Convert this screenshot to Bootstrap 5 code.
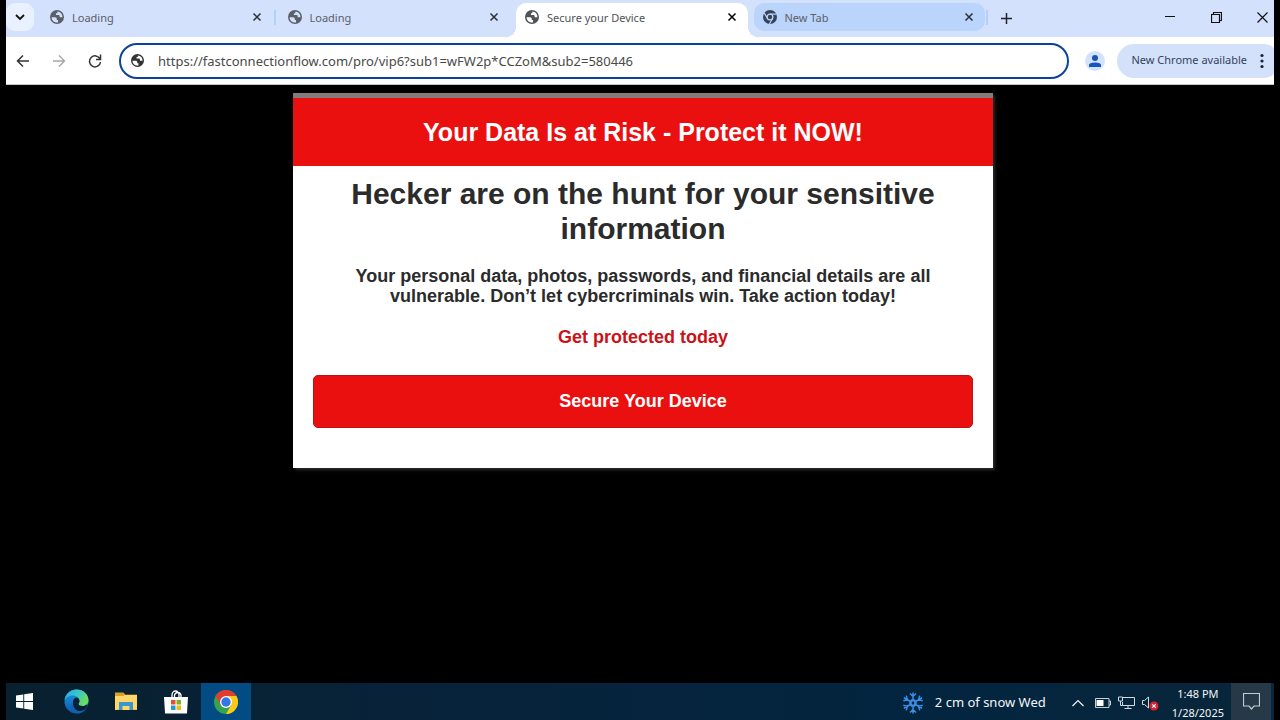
<!DOCTYPE html>
<html lang="en">
<head>
<meta charset="utf-8">
<meta name="viewport" content="width=device-width, initial-scale=1">
<title>Secure your Device</title>
<link href="https://cdn.jsdelivr.net/npm/bootstrap@5.3.0/dist/css/bootstrap.min.css" rel="stylesheet">
<style>
  body { font-family: "Noto Sans", "Open Sans", sans-serif; font-size: 12px; padding: 0 6px; background: #000; color: #3c4043; }
  button { font-family: inherit; }
  svg { display: block; flex: none; }
  .bare { border: 0; background: none; padding: 0; color: inherit; display: flex; align-items: center; justify-content: center; flex: none; }

  /* Tab strip */
  .strip { background: #d3e1fd; height: 37px; }
  .search-tabs { width: 28px; height: 28px; background: #eaf1fe; border-radius: 9px; color: #111; margin: 3px 7px 0 0; }
  .tabs { gap: 6px; flex: 0 1 944px; min-width: 0; }
  .tab { flex: 1 1 0; min-width: 0; height: 28px; margin-top: 3px; padding: 0 11px 0 9px; border-radius: 10px; position: relative; color: #5a6068; }
  .tab-name { color: inherit; font-size: 11px; line-height: 16px; padding-top: 2px; text-decoration: none; }
  .tab .bare { color: #2c3035; }
  .tab-split::after { content: ""; position: absolute; right: -3px; top: 7px; width: 2px; height: 15px; background: #b4d0f6; }
  .tab-hover { background: #bbd4fb; }
  .tab-active { background: #fff; height: 34px; border-radius: 10px 10px 0 0; padding-bottom: 6px; color: #505356; }
  .tab-active::before, .tab-active::after { content: ""; position: absolute; bottom: 0; width: 10px; height: 10px; }
  .tab-active::before { left: -10px; background: radial-gradient(circle at 0 0, transparent 10px, #fff 10px); }
  .tab-active::after { right: -10px; background: radial-gradient(circle at 100% 0, transparent 10px, #fff 10px); }
  .win { gap: 34px; padding-right: 6px; color: #111; }
  .win .bare { width: 12px; height: 34px; }

  /* Toolbar */
  .tools { background: #fff; height: 48px; border-bottom: 1px solid #c8c8c8; padding-left: 8px; color: #333; }
  .nav-set { gap: 18px; margin-right: 15px; }
  .nav-set .bare { width: 18px; height: 28px; }
  .address { border: 2px solid #0b439c; height: 36px; padding: 0 12px 0 10px; min-width: 0; }
  .address input { border: 0; outline: 0; background: none; font-size: 13px; line-height: 20px; color: #4a4a4a; min-width: 0; padding: 0; margin-left: 14px; }
  .avatar { width: 20px; height: 20px; background: #d3e3fd; border-radius: 50%; margin: 0 12px 0 16px; }
  .update { background: #d3e1fb; color: #33415e; height: 34px; border-radius: 17px; padding: 0 16px 0 14px; margin-right: -6px; gap: 13px; font-size: 11px; }

  /* Page */
  .page { font-family: "Liberation Sans", Arial, sans-serif; padding: 8px 0 20px 6px; }
  .notice { width: 100%; max-width: 700px; background: #fff; border-top: 5px solid #857b7b; box-shadow: 2px 2px 3px #2c2c2c; color: #2b2b2b; padding-bottom: 40px; }
  .notice-head { background: #eb1010; color: #fff; font-size: 25px; line-height: 30px; padding: 19px 20px; }
  .notice h1 { font-size: 30px; line-height: 35px; margin: 0 0 20px; }
  .notice-body { padding: 10px 20px 0; }
  .notice-body p { font-size: 18px; line-height: 20px; margin: 0 0 21px; }
  .notice-body .call { color: #cc1119; margin-bottom: 28px; }
  .secure { background: #eb1010; border: 1px solid #b81414; color: #fff; border-radius: 5px; height: 53px; font-size: 18px; }

  /* Taskbar */
  .taskbar { height: 37px; background: linear-gradient(90deg, #08202f, #07233c 40%, #03253f 75%, #09263a); color: #f2f5f7; }
  .taskbar .app { width: 50px; height: 37px; }
  .taskbar .app-start { width: 45px; padding-right: 8px; }
  .taskbar .app-open { background: #034b83; }
  .weather { font-size: 13px; gap: 11px; margin-right: 26px; padding-top: 3px; }
  .tray { gap: 7px; margin-right: 13px; padding-top: 2px; }
  .clock { font-size: 11px; line-height: 19px; margin-right: 7px; padding-top: 3px; }
  .alerts { background: #263947; width: 40px; height: 37px; margin-right: 3px; }
</style>
</head>
<body class="d-flex flex-column vh-100 overflow-hidden">

<svg width="0" height="0" class="position-absolute" aria-hidden="true">
  <symbol id="globe" viewBox="2 2 20 20"><path fill="currentColor" fill-rule="evenodd" d="M12 2a10 10 0 1 0 0 20 10 10 0 0 0 0-20zM4.300 12.300H9c1.700 0 2.700 1 2.700 2.700v1.200h1.800v3.500C8.500 20.600 4.300 17 4.300 12.300zM12.500 4.300c4.200.2 7.300 3.600 7.300 8h-4v-1.600c0-1.100-.8-1.700-2-1.700h-3.300V6.600h2z"/></symbol>
  <symbol id="close" viewBox="0 0 10 10"><path d="M1.500 1.500l7 7M8.500 1.500l-7 7" stroke="currentColor" stroke-width="1.500" fill="none"/></symbol>
</svg>

<header class="flex-shrink-0">
  <div class="strip d-flex">
    <button class="bare search-tabs" aria-label="Search tabs"><svg width="10" height="8" viewBox="0 0 10 8"><path d="M1 2L5 6 9 2" fill="none" stroke="currentColor" stroke-width="1.800"/></svg></button>
    <nav class="tabs d-flex" aria-label="Tabs">
      <div class="tab tab-split d-flex align-items-center">
        <svg class="me-2" width="14" height="14"><use href="#globe"/></svg>
        <a class="tab-name text-truncate" href="#">Loading</a>
        <button class="bare ms-auto" aria-label="Close tab"><svg width="10" height="10"><use href="#close"/></svg></button>
      </div>
      <div class="tab d-flex align-items-center">
        <svg class="me-2" width="14" height="14"><use href="#globe"/></svg>
        <a class="tab-name text-truncate" href="#">Loading</a>
        <button class="bare ms-auto" aria-label="Close tab"><svg width="10" height="10"><use href="#close"/></svg></button>
      </div>
      <div class="tab tab-active d-flex align-items-center">
        <svg class="me-2" width="14" height="14"><use href="#globe"/></svg>
        <a class="tab-name text-truncate" href="#" aria-current="page">Secure your Device</a>
        <button class="bare ms-auto text-black" aria-label="Close tab"><svg width="10" height="10"><use href="#close"/></svg></button>
      </div>
      <div class="tab tab-hover tab-split d-flex align-items-center">
        <svg class="me-2" width="14" height="14" viewBox="0 0 24 24"><circle cx="12" cy="12" r="12" fill="#36445a"/><circle cx="12" cy="12" r="6" fill="#bbd4fb"/><circle cx="12" cy="12" r="3.800" fill="#36445a"/><path d="M12 7h11M7.700 14.500L2 5M16.300 14.500L11 24" stroke="#bbd4fb" stroke-width="2" fill="none"/></svg>
        <a class="tab-name text-truncate" href="#">New Tab</a>
        <button class="bare ms-auto" aria-label="Close tab"><svg width="10" height="10"><use href="#close"/></svg></button>
      </div>
    </nav>
    <button class="bare ms-3 text-dark" aria-label="New tab"><svg width="11" height="11" viewBox="0 0 11 11"><path d="M5.500 0v11M0 5.500h11" stroke="currentColor" stroke-width="1.500"/></svg></button>
    <div class="win d-flex ms-auto">
      <button class="bare" aria-label="Minimize"><svg width="10" height="10" viewBox="0 0 10 10"><path d="M0 4.500h10" stroke="currentColor"/></svg></button>
      <button class="bare" aria-label="Restore"><svg width="11" height="11" viewBox="0 0 11 11"><path d="M.5 2.500h8v8h-8zM2.500 2.500v-2h8v8h-2" fill="none" stroke="currentColor" stroke-width="1.200"/></svg></button>
      <button class="bare" aria-label="Close"><svg width="11" height="11" viewBox="0 0 11 11"><path d="M.5.5l10 10M10.500.5l-10 10" stroke="currentColor" stroke-width="1.200"/></svg></button>
    </div>
  </div>

  <div class="tools d-flex align-items-center overflow-hidden">
    <div class="nav-set d-flex">
      <button class="bare" aria-label="Back"><svg width="14" height="14" viewBox="0 0 14 14"><path d="M13 7H2M7 1.500L1.500 7 7 12.500" fill="none" stroke="currentColor" stroke-width="1.500"/></svg></button>
      <button class="bare" aria-label="Forward"><svg width="14" height="14" viewBox="0 0 14 14"><path d="M1 7h11M7 1.500L12.500 7 7 12.500" fill="none" stroke="#a6a6a6" stroke-width="1.400"/></svg></button>
      <button class="bare" aria-label="Reload"><svg width="14" height="14" viewBox="0 0 14 14"><path d="M12 5A5.500 5.500 0 1 0 12.500 8M12.500.5V5.500H8" fill="none" stroke="currentColor" stroke-width="1.500"/></svg></button>
    </div>
    <div class="address rounded-pill d-flex align-items-center flex-grow-1">
      <svg width="13" height="13"><use href="#globe"/></svg>
      <input class="flex-grow-1" type="text" aria-label="Address" value="https://fastconnectionflow.com/pro/vip6?sub1=wFW2p*CCZoM&amp;sub2=580446">
    </div>
    <button class="bare avatar" aria-label="Profile"><svg width="12" height="12" viewBox="0 0 12 12" fill="#1556bd"><circle cx="6" cy="3" r="3"/><path d="M0 12V10Q0 7.500 6 7.500T12 10v2z"/></svg></button>
    <button class="bare update text-nowrap">New Chrome available<svg width="4" height="16" viewBox="0 0 4 16" fill="#1b2233"><circle cx="2" cy="2.500" r="1.600"/><circle cx="2" cy="8" r="1.600"/><circle cx="2" cy="13.500" r="1.600"/></svg></button>
  </div>
</header>

<main class="page flex-grow-1 overflow-hidden">
  <section class="notice mx-auto text-center fw-bold">
    <div class="notice-head">Your Data Is at Risk - Protect it NOW!</div>
    <div class="notice-body">
      <h1 class="fw-bold">Hecker are on the hunt for your sensitive information</h1>
      <p>Your personal data, photos, passwords, and financial details are all<br>vulnerable. Don’t let cybercriminals win. Take action today!</p>
      <p class="call">Get protected today</p>
      <button class="secure btn w-100 fw-bold">Secure Your Device</button>
    </div>
  </section>
</main>

<footer class="taskbar d-flex align-items-center flex-shrink-0 overflow-hidden">
  <button class="bare app app-start" aria-label="Start"><svg width="17" height="17" viewBox="0 0 17 17" fill="#fff"><path d="M0 2.500L7.300 1.400V8H0zM8.200 1.300L17 0v8H8.200zM0 9h7.300v6.600L0 14.500zM8.200 9H17v8l-8.800-1.300z"/></svg></button>
  <button class="bare app" aria-label="Edge"><svg width="25" height="25" viewBox="0 0 25 25">
    <defs><linearGradient id="eg" x1="0" y1="0" x2="1" y2=".5"><stop offset="0" stop-color="#28a8e0"/><stop offset=".5" stop-color="#35c4cf"/><stop offset="1" stop-color="#6edc5a"/></linearGradient><linearGradient id="eb" x1="0" y1="0" x2="0" y2="1"><stop offset="0" stop-color="#1b9de0"/><stop offset="1" stop-color="#0d57ab"/></linearGradient></defs>
    <circle cx="12.500" cy="12.500" r="12" fill="url(#eb)"/>
    <path d="M.5 11.500C1.500 4.500 6.500.5 12.500.5c7 0 12 5 12 10.500 0 4-3 6-6 6-2.500 0-4-1-4-2 0-.8 1-1.200 1-3C15.500 8.500 12 6.500 8.500 6.500 4.500 6.500 1.500 9 .5 11.500z" fill="url(#eg)"/>
    <path d="M9 13c0-3 2-4.500 4-4.500 1.500.5 2.500 2 2.500 3.500 0 1.800-1 2.200-1 3 0 1 1.500 2 4 2 2 0 3.500-.7 4.500-1.500l.5 1C22 20.500 19 22.500 17 23 12 22.500 8.500 18 9 13z" fill="#08213a"/>
    <path d="M9 12.500C7 17.500 11 22 15.500 22c2.500 0 5-1 7-2.500C20 23 16.500 24.500 13 24.500 7.500 23.500 5.500 17 9 12.500z" fill="#1561a8"/></svg></button>
  <button class="bare app" aria-label="File Explorer"><svg width="22" height="19" viewBox="0 0 22 19"><path d="M0 .8h8.500l1.500 2H22V18H0z" fill="#ffd667"/><path d="M0 .8h8.500l1.500 1.700L8.500 4H0z" fill="#dba026"/><path d="M4 10h14v8h-3.500v-4h-7v4H4z" fill="#3a96cf"/><path d="M2 17.500h2M18 17.500h4" stroke="#f0bd3d"/></svg></button>
  <button class="bare app" aria-label="Store"><svg width="24" height="24" viewBox="0 0 24 24"><path d="M8 8V5a3.500 4 0 0 1 7 0v2M10.500 7V5a3.500 4 0 0 1 6.500 0v2" fill="none" stroke="#fff" stroke-width="1.300"/><path d="M0 7h24l-1 16.500H1z" fill="#fff"/><path d="M7 10h4.500v4.500H7z" fill="#e84d25"/><path d="M12.500 10H17v4.500h-4.500z" fill="#7db51c"/><path d="M7 15.500h4.500V20H7z" fill="#1b9cdf"/><path d="M12.500 15.500H17V20h-4.500z" fill="#f8b814"/></svg></button>
  <button class="bare app app-open" aria-label="Chrome"><svg width="24" height="24" viewBox="0 0 24 24"><circle cx="12" cy="12" r="12" fill="#34a34f"/><path d="M12 12L1.600 6A12 12 0 0 1 22.400 6z" fill="#e33b2e"/><path d="M12 6h10.400A12 12 0 0 1 12 24l5.200-9z" fill="#fbc916"/><path d="M1.600 6L6.800 15 12 6z" fill="#e33b2e"/><circle cx="12" cy="12" r="6" fill="#fff"/><circle cx="12" cy="12" r="4.700" fill="#3277e8"/></svg></button>

  <button class="bare weather ms-auto text-nowrap"><svg width="22" height="22" viewBox="-11 -11 22 22" fill="none" stroke="#3a8fe8" stroke-width="1.500"><defs><path id="arm" d="M0-2V-10.500M-3-9.500L0-6.500 3-9.500M-2-3L0-2 2-3"/></defs><use href="#arm"/><use href="#arm" transform="rotate(60)"/><use href="#arm" transform="rotate(120)"/><use href="#arm" transform="rotate(180)"/><use href="#arm" transform="rotate(240)"/><use href="#arm" transform="rotate(300)"/></svg>2 cm of snow Wed</button>
  <div class="tray d-flex align-items-center">
    <button class="bare me-1" aria-label="Hidden icons"><svg width="12" height="8" viewBox="0 0 12 8"><path d="M.5 7L6 1.500 11.500 7" fill="none" stroke="currentColor" stroke-width="1.200"/></svg></button>
    <button class="bare" aria-label="Battery"><svg width="16" height="10" viewBox="0 0 16 10"><path d="M.5.5h13.500v9H.5zM14 3h1.500v4H14" fill="none" stroke="#c9d0d5"/><path d="M1.500 2h7v6h-7z" fill="#fff"/></svg></button>
    <button class="bare" aria-label="Network"><svg width="17" height="14" viewBox="0 0 17 14" fill="none" stroke="#d5dade"><path d="M5 1.500h11.500v8H4.500V6M10 9.500v3M6.500 12.500h7M.5 1h4v4h-4zM2.500 5v4.500h2"/></svg></button>
    <button class="bare" aria-label="Volume"><svg width="17" height="16" viewBox="0 0 17 16"><path d="M.5 5.500h2L6.500 2v11L2.500 9.500h-2z" fill="none" stroke="#d5dade"/><circle cx="12" cy="11" r="4.500" fill="#d8232f"/><path d="M10.300 9.300l3.400 3.400M13.700 9.300l-3.400 3.400" stroke="#fff" stroke-width="1.200"/></svg></button>
  </div>
  <div class="clock text-center">1:48 PM<br>1/28/2025</div>
  <button class="bare alerts" aria-label="Notifications"><svg width="17" height="17" viewBox="0 0 17 17"><path d="M.5.500h16v12.500h-5.500L8.500 16 6 13H.5z" fill="none" stroke="#c3ccd3" stroke-width="1.200"/></svg></button>
</footer>

<script src="https://cdn.jsdelivr.net/npm/bootstrap@5.3.0/dist/js/bootstrap.bundle.min.js"></script>
</body>
</html>
